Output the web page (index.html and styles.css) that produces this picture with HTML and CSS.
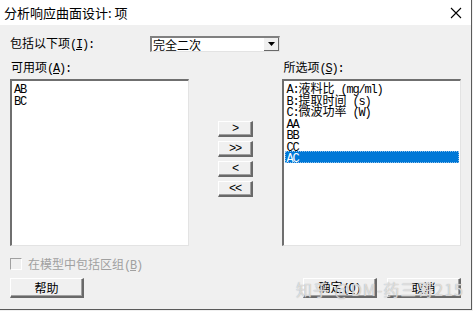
FILE: index.html
```html
<!DOCTYPE html>
<html lang="zh-CN">

<head>
    <meta charset="UTF-8">
    <meta name="viewport" content="width=device-width, initial-scale=1.0">
    <title>分析响应曲面设计: 项</title>
    <link rel="stylesheet" href="styles.css">
</head>

<body>
    <div class="window">
        <div class="titlebar">
            <span class="title">分析响应曲面设计: 项</span>
            <svg class="close" width="12" height="12" viewBox="0 0 12 12">
                <path d="M1 1 L11 11 M11 1 L1 11" stroke="#000" stroke-width="1.1" fill="none" />
            </svg>
        </div>

        <div class="content">
            <div class="include-row">
                <label class="label">包括以下项<span class="en">(<u>I</u>):</span></label>
                <div class="combo">
                    <span class="combo-text">完全二次</span>
                    <span class="combo-btn">
                        <svg width="7" height="4" viewBox="0 0 7 4"><path d="M0 0 H7 L3.5 4 Z" fill="#000" /></svg>
                    </span>
                </div>
            </div>

            <div class="lists">
                <div class="col">
                    <div class="label">可用项<span class="en">(<u>A</u>):</span></div>
                    <ul class="listbox">
                        <li><span class="en">AB</span></li>
                        <li><span class="en">BC</span></li>
                    </ul>
                </div>

                <div class="movers">
                    <button class="btn move">&gt;</button>
                    <button class="btn move">&gt;&gt;</button>
                    <button class="btn move">&lt;</button>
                    <button class="btn move">&lt;&lt;</button>
                </div>

                <div class="col">
                    <div class="label">所选项<span class="en">(<u>S</u>):</span></div>
                    <ul class="listbox">
                        <li><span class="en">A:</span>液料比<span class="en"> (mg/ml)</span></li>
                        <li><span class="en">B:</span>提取时间<span class="en"> (s)</span></li>
                        <li><span class="en">C:</span>微波功率<span class="en"> (W)</span></li>
                        <li><span class="en">AA</span></li>
                        <li><span class="en">BB</span></li>
                        <li><span class="en">CC</span></li>
                        <li class="selected"><span class="en">AC</span></li>
                    </ul>
                </div>
            </div>

            <div class="check-row">
                <span class="checkbox"></span>
                <span class="disabled">在模型中包括区组<span class="en">(<u>B</u>)</span></span>
            </div>

            <div class="footer">
                <button class="btn wide">帮助</button>
                <div class="footer-right">
                    <button class="btn wide">确定<span class="en">(<u>O</u>)</span></button>
                    <button class="btn wide">取消</button>
                </div>
            </div>
        </div>

        <div class="watermark">知乎 @DM-药三哥215</div>
    </div>
</body>

</html>
```

FILE: styles.css
```css
body {
    margin: 0;
    background-color: #f0f0f0;
    font-family: "Noto Sans CJK SC", sans-serif;
    font-size: 12px;
    color: #000;
}

.window {
    position: relative;
    width: 471px;
    height: 309px;
    background-color: #f0f0f0;
    border-right: 1px solid #5a5a5a;
    border-bottom: 1px solid #5a5a5a;
    overflow: hidden;
}

.titlebar {
    height: 25px;
    background-color: #fff;
    display: flex;
    align-items: center;
    justify-content: space-between;
    padding: 0 9px 0 4px;
}

.title {
    font-size: 13px;
    line-height: 25px;
}

.en {
    font-family: "Liberation Mono", monospace;
    font-size: 12px;
    letter-spacing: -1.2px;
}

.content {
    padding: 10px 10px 0 10px;
}

.label {
    line-height: 17px;
    white-space: nowrap;
}

.include-row {
    display: flex;
    align-items: center;
    height: 17px;
}

.include-row .label {
    width: 140px;
}

.combo {
    width: 126px;
    height: 13px;
    background-color: #fff;
    border-top: 2px solid #808080;
    border-left: 2px solid #808080;
    border-right: 1px solid #e3e3e3;
    border-bottom: 1px solid #e3e3e3;
    display: flex;
    align-items: center;
    justify-content: space-between;
    padding-left: 1px;
}

.combo-text {
    line-height: 13px;
}

.combo-btn {
    width: 15px;
    height: 13px;
    background-color: #f0f0f0;
    border-right: 1px solid #696969;
    border-bottom: 1px solid #696969;
    box-sizing: border-box;
    display: flex;
    align-items: center;
    justify-content: center;
}

.lists {
    display: flex;
    margin-top: 6px;
}

.col {
    width: 179px;
    display: flex;
    flex-direction: column;
}

.col .label {
    padding-left: 1px;
}

.listbox {
    list-style: none;
    margin: 1px 0 0 0;
    padding: 1px 1px;
    height: 162px;
    background-color: #fff;
    border-top: 2px solid #6f6f6f;
    border-left: 2px solid #6f6f6f;
    border-right: 1px solid #e3e3e3;
    border-bottom: 1px solid #e3e3e3;
}

.listbox li {
    height: 11.5px;
    line-height: 11px;
    padding-left: 1px;
    white-space: nowrap;
}

.listbox li.selected {
    background-color: #0078d7;
    color: #fff;
    outline: 1px dotted #8fc0ea;
    outline-offset: -1px;
}

.movers {
    width: 94px;
    display: flex;
    flex-direction: column;
    align-items: center;
    justify-content: center;
    gap: 4px;
    padding-top: 14px;
}

.btn {
    font-family: "Noto Sans CJK SC", sans-serif;
    font-size: 12px;
    background-color: #f0f0f0;
    color: #000;
    border-top: 1px solid #fff;
    border-left: 1px solid #fff;
    border-right: 2px solid #696969;
    border-bottom: 2px solid #696969;
    box-shadow: inset -1px -1px 0 #a0a0a0;
    padding: 0;
    margin: 0;
}

.move {
    width: 35px;
    height: 16px;
    line-height: 12px;
    font-family: "Liberation Mono", monospace;
    font-size: 12px;
    letter-spacing: -1.2px;
}

.check-row {
    display: flex;
    align-items: center;
    margin-top: 11px;
    height: 13px;
}

.checkbox {
    width: 10px;
    height: 10px;
    border-top: 1px solid #a0a0a0;
    border-left: 1px solid #a0a0a0;
    border-right: 1px solid #fff;
    border-bottom: 1px solid #fff;
    background-color: #f0f0f0;
    margin-right: 6px;
}

.disabled {
    color: #a0a0a0;
}

.footer {
    display: flex;
    justify-content: space-between;
    margin-top: 8px;
}

.footer-right {
    display: flex;
    gap: 10px;
}

.wide {
    width: 74px;
    height: 20px;
    line-height: 16px;
}

.watermark {
    position: absolute;
    left: 296px;
    top: 277px;
    font-size: 16px;
    color: rgba(255, 255, 255, 0.6);
    text-shadow: 0 0 1px #9a9a9a;
    letter-spacing: 1px;
    white-space: nowrap;
    pointer-events: none;
}
```
